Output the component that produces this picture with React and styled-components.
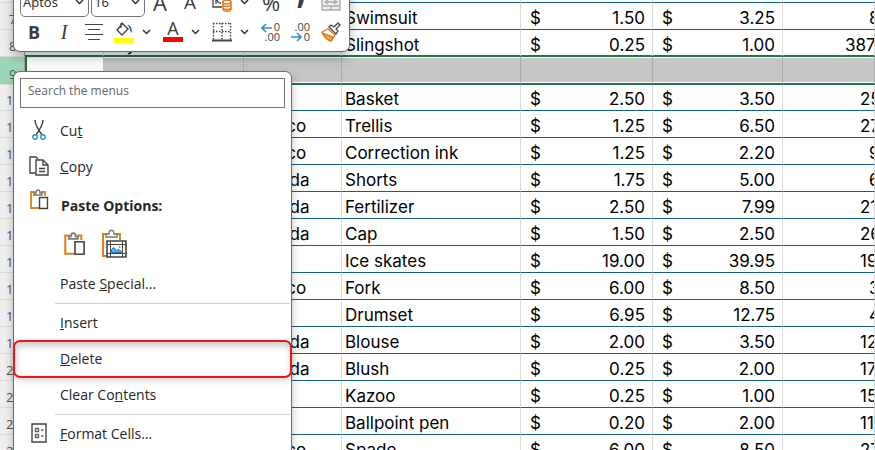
import React from "react";
import styled, { createGlobalStyle } from "styled-components";

const GlobalStyle = createGlobalStyle`
  * { box-sizing: border-box; }
  body {
    margin: 0;
    overflow: hidden;
    background: #ffffff;
    font-family: "Open Sans", "Noto Sans", sans-serif;
  }
  button, select, input { font: inherit; color: inherit; }
`;

const Screen = styled.main`
  position: relative;
  height: 100vh;
  overflow: hidden;
`;

/* ---------- worksheet ---------- */

const Sheet = styled.table`
  width: 100%;
  table-layout: fixed;
  border-spacing: 0;
  font-family: Inter, "Liberation Sans", sans-serif;
  font-size: 17px;
  line-height: 22px;
  color: #000000;
`;

const Col = styled.col`
  width: ${(props) => props.$w ? `${props.$w}px` : "auto"};
`;

const Cell = styled.td`
  height: ${(props) => props.$h}px;
  padding: 0 0 0 ${(props) => props.$indent || 3}px;
  vertical-align: bottom;
  white-space: nowrap;
  overflow: hidden;
  border-right: 1px solid #d9d9d9;
  border-bottom: ${(props) => props.$above ? "2px solid #217346" : "1px solid #156082"};
  line-height: ${(props) => props.$above ? 20 : 22}px;
`;

const SelectedCell = styled.td`
  height: 28px;
  padding: 0;
  background: ${(props) => props.$active ? "#ffffff" : "#c6c6c6"};
  border-right: 1px solid ${(props) => props.$active ? "#c6c6c6" : "#adadad"};
  border-left: ${(props) => props.$active ? "2px solid #217346" : "0"};
  border-bottom: 2px solid #217346;
  box-shadow: inset 0 1px #ffffff, inset 0 -1px #ffffff;
`;

const RowHead = styled.th`
  padding: 0 0 0 ${(props) => props.$wide ? 6 : 9}px;
  vertical-align: bottom;
  text-align: left;
  font-family: "Open Sans", sans-serif;
  font-size: 13px;
  font-weight: 400;
  line-height: 20px;
  color: ${(props) => props.$on ? "#217346" : "#555555"};
  background: ${(props) => props.$on ? "#9fd5b7" : "#f0f0f0"};
  border-right: 1px solid #a6a6a6;
  border-bottom: 1px solid #dcdcdc;
`;

const Money = styled.div`
  display: flex;
  justify-content: space-between;
  padding: 0 7px 0 6px;
`;

/* ---------- mini toolbar ---------- */

const Toolbar = styled.div`
  position: absolute;
  top: -19px;
  left: 13px;
  width: 337px;
  padding: 5px 3px 4px 5px;
  background: #ffffff;
  border: 1px solid #6b6b6b;
  border-radius: 7px;
  box-shadow: 0 5px 12px rgba(0, 0, 0, 0.3);
  color: #3b3b3b;
`;

const ToolRow = styled.div`
  display: flex;
  align-items: center;
  height: 30px;
`;

const Group = styled.div`
  display: flex;
  gap: 2px;
  width: ${(props) => props.$w}px;
  padding-left: 1px;
`;

const Pick = styled.div`
  display: flex;
  flex: ${(props) => props.$grow} 1 0;
  align-items: center;
  justify-content: space-between;
  height: 29px;
  padding: 0 4px 0 2px;
  border: 1px solid #767676;
  border-radius: 5px;
`;

const Select = styled.select`
  flex: 1;
  min-width: 0;
  padding: 0;
  appearance: none;
  border: 0;
  background: transparent;
  font-size: 13px;
  color: #262626;
`;

const ToolButton = styled.button`
  display: flex;
  align-items: center;
  justify-content: center;
  width: 30px;
  height: 28px;
  padding: 0;
  border: 0;
  background: transparent;
  font-size: ${(props) => props.$size || 19}px;
  font-weight: ${(props) => props.$bold ? 700 : 400};
  font-style: ${(props) => props.$italic ? "italic" : "normal"};
  font-family: ${(props) => props.$italic ? '"Liberation Serif", serif' : "inherit"};
`;

const MoreButton = styled(ToolButton)`
  justify-content: flex-start;
  width: 19px;
  padding-left: 3px;
`;

const CommaButton = styled(ToolButton)`
  padding-bottom: 20px;
  line-height: 8px;
`;

const TopPair = styled.div`
  display: flex;
  width: 62px;
`;

const FontColor = styled.span`
  width: 20px;
  height: 20px;
  border-bottom: 5px solid #ff0000;
  font-size: 18px;
  line-height: 13px;
`;

/* ---------- context menu ---------- */

const Menu = styled.div`
  position: absolute;
  top: 71px;
  left: 13px;
  width: 279px;
  padding: 6px 0;
  background: #ffffff;
  border: 1px solid #6b6b6b;
  border-radius: 7px;
  box-shadow: 0 4px 10px rgba(0, 0, 0, 0.25);
  font-size: 14px;
  color: #262626;
`;

const Search = styled.input`
  display: block;
  width: calc(100% - 12px);
  height: 30px;
  margin: 0 6px 5px;
  padding: 0 7px 5px;
  border: 1px solid #767676;
  font-size: 12px;
  &::placeholder { color: #666666; opacity: 1; }
`;

const Item = styled.button`
  position: relative;
  display: flex;
  align-items: center;
  gap: 8px;
  width: 100%;
  height: 36px;
  padding: 0 12px 2px;
  border: 0;
  background: transparent;
  text-align: left;
`;

const MarkedItem = styled(Item)`
  &::after {
    content: "";
    position: absolute;
    inset: -1px;
    border: 2px solid #f01414;
    border-radius: 7px;
    box-shadow: 0 3px 6px rgba(0, 0, 0, 0.15), inset 1px 4px 7px rgba(0, 0, 0, 0.2);
  }
`;

const Slot = styled.span`
  display: flex;
  justify-content: center;
  width: 26px;
`;

const Heading = styled.div`
  display: flex;
  gap: 9px;
  height: 40px;
  padding: 4px 12px 0;
  font-weight: 700;
  line-height: 34px;
`;

const PasteRow = styled.div`
  display: flex;
  align-items: center;
  gap: 8px;
  height: 41px;
  padding: 0 0 4px 45px;
`;

const PasteButton = styled.button`
  display: flex;
  align-items: center;
  justify-content: center;
  width: 31px;
  height: 36px;
  padding: 0;
  border: 0;
  background: transparent;
`;

const Divider = styled.hr`
  height: 1px;
  margin: 1px 1px 1px 41px;
  border: 0;
  background: #d1d1d1;
`;

/* ---------- icons ---------- */

const Chevron = () => (
  <svg width="9" height="6" viewBox="0 0 9 6" fill="none" stroke="#333" strokeWidth="1.5">
    <path d="M1 1l3.5 3.5L8 1" />
  </svg>
);

const AlignIcon = () => (
  <svg width="18" height="18" viewBox="0 0 18 18" stroke="#444" strokeWidth="1.2">
    <path d="M0 1.5h18M3 6.5h12M0 11.5h18M3 16.5h12" />
  </svg>
);

const FillIcon = () => (
  <svg width="20" height="22" viewBox="0 0 20 22" fill="none">
    <path d="M8 2l6 6-6 6-5-5 6-7M8 2c-2 1-1 4-1 5" stroke="#444" strokeWidth="1.4" />
    <path d="M13 4c4 0 5 3 5 8-2-1-2-4-3-6z" fill="#1e74bd" />
    <path d="M0 17h20v5H0z" fill="#ffff00" />
  </svg>
);

const BordersIcon = () => (
  <svg width="20" height="20" viewBox="0 0 20 20" stroke="#444" fill="none">
    <path d="M1 1.500h18M1 9.500h18M1.500 1v17M10 1v17M18.500 1v17" strokeWidth="1.4" strokeDasharray="1.5 1.5" />
    <path d="M0 18.500h20" strokeWidth="2" />
  </svg>
);

const MoneyIcon = () => (
  <svg width="20" height="22" viewBox="0 0 20 22" fill="none">
    <path d="M1 2h17v7M1 2v14h9M9 5c-5-1-5 8 0 7M11 6v3M4 5v8" stroke="#444" strokeWidth="1.3" />
    <path d="M11 11v7c0 3 8 3 8 0v-7" fill="#fff" stroke="#e07416" strokeWidth="1.4" />
    <ellipse cx="15" cy="11" rx="4" ry="2" fill="#fff" stroke="#e07416" strokeWidth="1.4" />
    <path d="M11 14c1 2 7 2 8 0M11 17c1 2 7 2 8 0" stroke="#e07416" strokeWidth="1.4" />
  </svg>
);

const MergeIcon = () => (
  <svg width="20" height="18" viewBox="0 0 20 18" fill="#eee" stroke="#aaa" strokeWidth="1.3">
    <path d="M1 1h18v16H1zM1 5h18M1 13h18M10 1v4M10 13v4M4 9h12M7 7L4 9l3 2M13 7l3 2-3 2" />
  </svg>
);

const DecimalIcon = ({ less }) => (
  <svg width="20" height="20" viewBox="0 0 20 20" fontFamily="Open Sans" fontSize="11" fill="#444">
    <text x="19" y="9" textAnchor="end">{less ? ".00" : "0"}</text>
    <text x="19" y="19" textAnchor="end">{less ? "0" : ".00"}</text>
    <path
      d={less ? "M0 15h10M6 11l4 4-4 4" : "M1 6h10M5 2L1 6l4 4"}
      fill="none" stroke="#2b8fd6" strokeWidth="1.6"
    />
  </svg>
);

const BrushIcon = () => (
  <svg width="20" height="20" viewBox="0 0 20 20" fill="none" strokeWidth="1.3">
    <path d="M7 7l7 6-4 6C6 17 2 14 1 10z" fill="#fff" stroke="#e07416" />
    <path d="M2 11l10 4-2 4C6 18 3 14 2 11z" fill="#f3a24e" stroke="#e07416" />
    <path d="M8 5l7 7 2-3-2-2 4-4-2-2-4 4-3-2z" fill="#fff" stroke="#444" />
  </svg>
);

const CutIcon = () => (
  <svg width="14" height="20" viewBox="0 0 14 20" fill="none" strokeWidth="1.4">
    <path d="M3 0c0 4 2 8 7 15M11 0c0 4-2 8-7 15" stroke="#444" />
    <circle cx="3" cy="17" r="2.200" stroke="#2b8fd6" />
    <circle cx="11" cy="17" r="2.200" stroke="#2b8fd6" />
  </svg>
);

const CopyIcon = () => (
  <svg width="20" height="20" viewBox="0 0 20 20" fill="none" stroke="#444" strokeWidth="1.400">
    <path d="M7 17H1V1h6l2 2" />
    <path d="M7 4h7l5 5v10H7z" fill="#fafafa" />
    <path d="M14 4v5h5M10 12.500h6M10 15.500h6" />
  </svg>
);

const PasteIcon = ({ w = 19 }) => (
  <svg width={w} height={w + 2} viewBox="0 0 19 21" fill="none" strokeWidth="1.400">
    <path d="M5 3H1v16h8M11 3h4v4" stroke="#e07f1b" strokeWidth="1.800" />
    <path d="M4 6V4h2c0-4 4-4 4 0h2v2z" fill="#fff" stroke="#777" />
    <path d="M9.500 8.500h8v11h-8z" fill="#fafafa" stroke="#444" />
  </svg>
);

const PastePictureIcon = () => (
  <svg width="26" height="30" viewBox="0 0 26 30" fill="none" strokeWidth="1">
    <path d="M7 5H2v22h4M14 5h5v6" stroke="#e07f1b" strokeWidth="2" />
    <path d="M5 8V5h3c0-5 5-5 5 0h3v3z" fill="#fff" stroke="#777" strokeWidth="1.400" />
    <path d="M6 12h19v16H6z" fill="#fff" stroke="#444" strokeWidth="1.600" />
    <path d="M9.500 12v16M21.500 12v16M6 15.500h19M6 24.500h19" stroke="#444" />
    <path d="M10.500 23.500v-3l2-2 3 3 2-1 3 2v1z" fill="#63b0e8" stroke="#1e74bd" />
    <circle cx="18.500" cy="18" r="1" fill="#e07f1b" />
  </svg>
);

const FormatIcon = () => (
  <svg width="16" height="20" viewBox="0 0 16 20" fill="none" stroke="#444" strokeWidth="1.400">
    <path d="M1 1h14v18H1z" />
    <path d="M4.500 5.500h3v3h-3zM4.500 11.500h3v3h-3zM10 7h2.500M10 13h2.500" stroke="#666" />
  </svg>
);

/* ---------- data ---------- */

const rows = [
  { n: 7, name: "Swimsuit", cost: "1.50", price: "3.25", units: "8" },
  { n: 8, kind: "Toys", name: "Slingshot", cost: "0.25", price: "1.00", units: "387" },
  { n: 9, selected: true },
  { n: 10, name: "Basket", cost: "2.50", price: "3.50", units: "25" },
  { n: 11, country: "Mexico", name: "Trellis", cost: "1.25", price: "6.50", units: "27" },
  { n: 12, country: "Mexico", name: "Correction ink", cost: "1.25", price: "2.20", units: "9" },
  { n: 13, country: "Canada", name: "Shorts", cost: "1.75", price: "5.00", units: "6" },
  { n: 14, country: "Canada", name: "Fertilizer", cost: "2.50", price: "7.99", units: "21" },
  { n: 15, country: "Canada", name: "Cap", cost: "1.50", price: "2.50", units: "26" },
  { n: 16, name: "Ice skates", cost: "19.00", price: "39.95", units: "19" },
  { n: 17, country: "Mexico", name: "Fork", cost: "6.00", price: "8.50", units: "3" },
  { n: 18, name: "Drumset", cost: "6.95", price: "12.75", units: "4" },
  { n: 19, country: "Canada", name: "Blouse", cost: "2.00", price: "3.50", units: "12" },
  { n: 20, country: "Canada", name: "Blush", cost: "0.25", price: "2.00", units: "17" },
  { n: 21, name: "Kazoo", cost: "0.25", price: "1.00", units: "15" },
  { n: 22, name: "Ballpoint pen", cost: "0.20", price: "2.00", units: "11" },
  { n: 23, country: "Mexico", name: "Spade", cost: "6.00", price: "8.50", units: "27" },
];

// left padding of the units column by number of leading digits
const unitIndent = { 1: 86, 2: 77, 3: 62 };

const SheetRow = ({ row }) => {
  if (row.selected) {
    return (
      <tr>
        <RowHead $on scope="row">{row.n}</RowHead>
        <SelectedCell $active />
        {[1, 2, 3, 4, 5, 6].map((c) => <SelectedCell key={c} />)}
      </tr>
    );
  }
  const cell = { $h: row.n === 10 ? 26 : 27, $above: row.n === 8 };
  return (
    <tr>
      <RowHead $wide={row.n > 9} scope="row">{row.n}</RowHead>
      <Cell {...cell} />
      <Cell {...cell}>{row.kind}</Cell>
      <Cell {...cell} $indent={4}>{row.country}</Cell>
      <Cell {...cell}>{row.name}</Cell>
      <Cell {...cell}><Money><span>$</span><span>{row.cost}</span></Money></Cell>
      <Cell {...cell}><Money><span>$</span><span>{row.price}</span></Money></Cell>
      <Cell {...cell} $indent={unitIndent[row.units.length]}>{row.units}</Cell>
    </tr>
  );
};

const MiniToolbar = () => (
  <Toolbar role="toolbar" aria-label="Formatting">
    <ToolRow>
      <Group $w={126}>
        <Pick $grow={4}>
          <Select aria-label="Font"><option>Aptos</option></Select>
          <Chevron />
        </Pick>
        <Pick $grow={3}>
          <Select aria-label="Font size"><option>16</option></Select>
          <Chevron />
        </Pick>
      </Group>
      <TopPair>
        <ToolButton $size={22} aria-label="Increase font size">A</ToolButton>
        <ToolButton $size={19} aria-label="Decrease font size">A</ToolButton>
      </TopPair>
      <ToolButton aria-label="Accounting format"><MoneyIcon /></ToolButton>
      <MoreButton aria-label="More currencies"><Chevron /></MoreButton>
      <ToolButton $size={22} aria-label="Percent">%</ToolButton>
      <CommaButton $size={32} $bold aria-label="Comma style">,</CommaButton>
      <ToolButton aria-label="Merge cells"><MergeIcon /></ToolButton>
    </ToolRow>
    <ToolRow>
      <ToolButton $size={18} $bold>B</ToolButton>
      <ToolButton $size={20} $italic>I</ToolButton>
      <ToolButton aria-label="Center"><AlignIcon /></ToolButton>
      <ToolButton aria-label="Fill color"><FillIcon /></ToolButton>
      <MoreButton aria-label="More fill colors"><Chevron /></MoreButton>
      <ToolButton aria-label="Font color"><FontColor>A</FontColor></ToolButton>
      <MoreButton aria-label="More font colors"><Chevron /></MoreButton>
      <ToolButton aria-label="Borders"><BordersIcon /></ToolButton>
      <MoreButton aria-label="More borders"><Chevron /></MoreButton>
      <ToolButton aria-label="Increase decimal"><DecimalIcon /></ToolButton>
      <ToolButton aria-label="Decrease decimal"><DecimalIcon less /></ToolButton>
      <ToolButton aria-label="Format painter"><BrushIcon /></ToolButton>
    </ToolRow>
  </Toolbar>
);

const ContextMenu = () => (
  <Menu>
    <Search type="text" placeholder="Search the menus" aria-label="Search the menus" />
    <Item><Slot><CutIcon /></Slot><span>Cu<u>t</u></span></Item>
    <Item><Slot><CopyIcon /></Slot><span><u>C</u>opy</span></Item>
    <Heading><Slot><PasteIcon /></Slot>Paste Options:</Heading>
    <PasteRow>
      <PasteButton aria-label="Paste"><PasteIcon w={22} /></PasteButton>
      <PasteButton aria-label="Paste as picture"><PastePictureIcon /></PasteButton>
    </PasteRow>
    <Item><Slot /><span>Paste <u>S</u>pecial...</span></Item>
    <Divider />
    <Item><Slot /><span><u>I</u>nsert</span></Item>
    <MarkedItem><Slot /><span><u>D</u>elete</span></MarkedItem>
    <Item><Slot /><span>Clear Co<u>n</u>tents</span></Item>
    <Divider />
    <Item><Slot><FormatIcon /></Slot><span><u>F</u>ormat Cells...</span></Item>
  </Menu>
);

export default function App() {
  return (
    <Screen>
      <GlobalStyle />
      <Sheet>
        <colgroup>
          <Col $w={25} />
          <Col $w={79} />
          <Col $w={140} />
          <Col $w={98} />
          <Col $w={179} />
          <Col $w={132} />
          <Col $w={130} />
          <Col />
        </colgroup>
        <tbody>
          <tr>
            <RowHead />
            {[1, 2, 3, 4, 5, 6, 7].map((c) => <Cell key={c} $h={3} />)}
          </tr>
          {rows.map((row) => <SheetRow key={row.n} row={row} />)}
        </tbody>
      </Sheet>
      <MiniToolbar />
      <ContextMenu />
    </Screen>
  );
}
